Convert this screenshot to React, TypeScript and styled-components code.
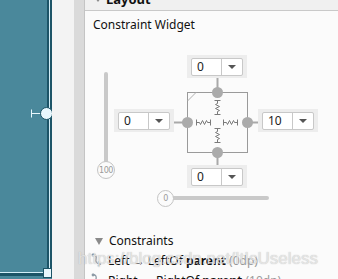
import React from 'react';
import styled, { createGlobalStyle } from 'styled-components';

const GlobalStyle = createGlobalStyle`
  html, body { margin: 0; padding: 0; }
  body {
    width: 338px;
    height: 279px;
    overflow: hidden;
    font-family: 'Noto Sans', 'Open Sans', sans-serif;
    background: #fbfbfb;
  }
`;

const Screen = styled.div`
  display: flex;
  width: 338px;
  height: 279px;
  overflow: hidden;
  position: relative;
`;

/* ---------- blueprint canvas ---------- */

const Canvas = styled.div`
  flex: none;
  width: 52px;
  height: 279px;
  background: #4a889b;
  position: relative;
  overflow: hidden;
`;

const SelectionOuter = styled.div`
  box-sizing: border-box;
  width: 52px;
  height: 276px;
  border-right: 2px solid #1c5467;
  border-bottom: 3px solid #1c5467;
`;

const SelectionLight = styled.div`
  box-sizing: border-box;
  height: 100%;
  border-right: 1px solid #d3eef7;
  border-bottom: 1px solid #d3eef7;
`;

const SelectionInner = styled.div`
  height: 100%;
  box-sizing: border-box;
  border-right: 2px solid #1c5467;
  background: #4a889b;
`;

const SideHandle = styled.div`
  position: absolute;
  left: 40px;
  top: 107px;
  width: 11px;
  height: 11px;
  border-radius: 50%;
  background: #e8f7fd;
  border: 1.5px solid #1c5467;
`;

const CornerHandle = styled.div`
  position: absolute;
  left: 43px;
  top: 268px;
  width: 7px;
  height: 8px;
  background: #e8f7fd;
  border: 1px solid #1c5467;
`;

const Anchor = styled.svg`
  position: absolute;
  left: 30px;
  top: 108px;
`;

/* ---------- gutter ---------- */

const Gutter = styled.div`
  flex: none;
  width: 22px;
  background: #f3f3f3;
`;

const Scroller = styled.div`
  flex: none;
  width: 10px;
  background: #dadada;
  border-right: 1px solid #c4c4c4;
`;

/* ---------- attributes panel ---------- */

const Panel = styled.div`
  flex: 1;
  background: #fbfbfb;
  min-width: 0;
  overflow: hidden;
`;

const Header = styled.div`
  height: 10px;
  background: #f0f0f0;
  border-bottom: 1px solid #c9c9c9;
  overflow: hidden;
  display: flex;
  align-items: flex-end;
  gap: 5px;
  padding-left: 10px;
`;

const HeaderText = styled.span`
  font-weight: bold;
  font-size: 13px;
  line-height: 13px;
  margin-bottom: 4px;
  color: #111;
`;

const HeaderCaret = styled.span`
  width: 0;
  height: 0;
  border-left: 3px solid transparent;
  border-right: 3px solid transparent;
  border-top: 4px solid #8a8a8a;
  margin-bottom: 8px;
`;

const Title = styled.div`
  margin-top: 6px;
  padding-left: 8px;
  font-size: 12px;
  line-height: 16px;
  color: #111;
`;

const Widget = styled.div`
  position: relative;
  height: 189px;
`;

const Diagram = styled.svg`
  position: absolute;
  left: 0;
  top: 0;
`;

const DropBox = styled.div<{ x: number; y: number }>`
  position: absolute;
  left: ${(p) => p.x}px;
  top: ${(p) => p.y}px;
  padding: 3px 4px 2px 4px;
  background: #ededed;
`;

const Field = styled.div`
  box-sizing: border-box;
  width: 52px;
  height: 18px;
  display: flex;
  background: #fff;
  border: 1px solid #c8c8c8;
  border-radius: 2px;
`;

const FieldValue = styled.span`
  flex: 1;
  padding-left: 5px;
  font-size: 12px;
  line-height: 16px;
  color: #222;
`;

const FieldButton = styled.span`
  width: 20px;
  border-left: 1px solid #c8c8c8;
  display: flex;
  align-items: center;
  justify-content: center;
  &::after {
    content: '';
    border-left: 4px solid transparent;
    border-right: 4px solid transparent;
    border-top: 4px solid #555;
  }
`;

const Track = styled.div<{ vertical?: boolean }>`
  position: absolute;
  background: #c9c9c9;
  border-radius: 2px;
  ${(p) =>
    p.vertical
      ? 'left: 19px; top: 39px; width: 4px; height: 92px;'
      : 'left: 87px; top: 163px; width: 97px; height: 4px;'}
`;

const Knob = styled.div<{ x: number; y: number; size: number }>`
  position: absolute;
  left: ${(p) => p.x}px;
  top: ${(p) => p.y}px;
  width: ${(p) => p.size}px;
  height: ${(p) => p.size}px;
  box-sizing: border-box;
  border-radius: 50%;
  border: 1px solid #c4c4c4;
  background: #fbfbfb;
  display: flex;
  align-items: center;
  justify-content: center;
  font-family: 'DejaVu Sans', sans-serif;
  font-size: 8px;
  letter-spacing: -0.5px;
  color: #9a9a9a;
`;

const SectionHead = styled.div`
  margin-top: 10px;
  padding-left: 10px;
  display: flex;
  align-items: center;
  gap: 6px;
  font-size: 12px;
  line-height: 18px;
  color: #111;
`;

const Caret = styled.span`
  width: 0;
  height: 0;
  border-left: 4px solid transparent;
  border-right: 4px solid transparent;
  border-top: 7px solid #8a8a8a;
`;

const ConstraintRow = styled.div`
  display: flex;
  align-items: center;
  gap: 6px;
  padding-left: 6px;
  height: 20px;
  font-size: 12px;
  color: #111;
  white-space: nowrap;
`;

const Strong = styled.b`
  font-weight: bold;
`;

const Muted = styled.span`
  color: #9a9a9a;
`;

const Watermark = styled.div`
  position: absolute;
  left: 78px;
  top: 249px;
  font-family: 'Liberation Sans', Arial, sans-serif;
  font-size: 17px;
  color: rgba(235, 235, 235, 0.85);
  text-shadow: 0 0 1px rgba(120, 120, 120, 0.5);
  white-space: nowrap;
  pointer-events: none;
`;

const Dropdown: React.FC<{ x: number; y: number; value: string }> = ({ x, y, value }) => (
  <DropBox x={x} y={y}>
    <Field>
      <FieldValue>{value}</FieldValue>
      <FieldButton />
    </Field>
  </DropBox>
);

const LinkIcon = () => (
  <svg width="11" height="14" viewBox="0 0 11 14">
    <path d="M2 1.5 Q6 2 5 6 Q4 10 8.5 11" fill="none" stroke="#8d9aa6" strokeWidth="1.3" />
    <circle cx="2" cy="2" r="1.4" fill="#8d9aa6" />
    <path d="M7 8.5 L9.5 11 L7 13" fill="none" stroke="#8d9aa6" strokeWidth="1.2" />
  </svg>
);

// spring drawn along an axis: start/end in widget coords
const vSpring = (x: number, y1: number, y2: number) => {
  const m = (y1 + y2) / 2;
  return `M${x - 3} ${y1} H${x + 3} M${x} ${y1} V${m - 4} L${x - 2} ${m - 3} L${x + 2} ${m - 1} L${x - 2} ${m + 1} L${x + 2} ${m + 3} L${x} ${m + 4} V${y2} M${x - 3} ${y2} H${x + 3}`;
};
const hSpring = (y: number, x1: number, x2: number) => {
  const m = (x1 + x2) / 2;
  return `M${x1} ${y - 3} V${y + 3} M${x1} ${y} H${m - 4} L${m - 3} ${y + 2} L${m - 1} ${y - 2} L${m + 1} ${y + 2} L${m + 3} ${y - 2} L${m + 4} ${y} H${x2} M${x2} ${y - 3} V${y + 3}`;
};

export default function App() {
  return (
    <>
      <GlobalStyle />
      <Screen>
        <Canvas>
          <SelectionOuter>
            <SelectionLight>
              <SelectionInner />
            </SelectionLight>
          </SelectionOuter>
          <Anchor width="11" height="11" viewBox="0 0 11 11">
            <path d="M1.5 1.5 V9.5 M1.5 5.5 H10" stroke="#e8f7fd" strokeWidth="1" fill="none" />
          </Anchor>
          <SideHandle />
          <CornerHandle />
        </Canvas>
        <Gutter />
        <Scroller />
        <Panel>
          <Header>
            <HeaderCaret />
            <HeaderText>Layout</HeaderText>
          </Header>
          <Title>Constraint Widget</Title>
          <Widget>
            <Track vertical />
            <Knob x={12} y={128} size={18}>100</Knob>
            <Track />
            <Knob x={72} y={157} size={17}>0</Knob>
            <Diagram width="253" height="189" viewBox="0 0 253 189">
              <g stroke="#a9a9a9" strokeWidth="2">
                <line x1="132.5" y1="45" x2="132.5" y2="59" />
                <line x1="89" y1="89.5" x2="102" y2="89.5" />
                <line x1="162" y1="89.5" x2="173" y2="89.5" />
                <line x1="132.5" y1="119" x2="132.5" y2="132" />
              </g>
              <rect x="102.5" y="59.5" width="60" height="60" fill="none" stroke="#9a9a9a" strokeWidth="1" />
              <line x1="102.5" y1="68" x2="111" y2="59.5" stroke="#b0b0b0" strokeWidth="1" />
              <g stroke="#7a7a7a" strokeWidth="1" fill="none">
                <path d={vSpring(132.5, 67.5, 81.5)} />
                <path d={vSpring(132.5, 95.5, 109.5)} />
                <path d={hSpring(89.5, 111.5, 125.5)} />
                <path d={hSpring(89.5, 138.5, 152.5)} />
              </g>
              <g fill="#ababab">
                <circle cx="132.5" cy="59.5" r="5.5" />
                <circle cx="102.5" cy="89.5" r="5.5" />
                <circle cx="162.5" cy="89.5" r="5.5" />
                <circle cx="132.5" cy="119.5" r="5.5" />
              </g>
            </Diagram>
            <Dropdown x={102} y={22} value="0" />
            <Dropdown x={29} y={76} value="0" />
            <Dropdown x={173} y={76} value="10" />
            <Dropdown x={102} y={132} value="0" />
          </Widget>
          <SectionHead>
            <Caret />
            <span>Constraints</span>
          </SectionHead>
          <ConstraintRow>
            <LinkIcon />
            <span>
              Left → LeftOf <Strong>parent</Strong> <Muted>(0dp)</Muted>
            </span>
          </ConstraintRow>
          <ConstraintRow>
            <LinkIcon />
            <span>
              Right → RightOf <Strong>parent</Strong> <Muted>(10dp)</Muted>
            </span>
          </ConstraintRow>
        </Panel>
        <Watermark>https://blog.csdn.net/ItIsUseless</Watermark>
      </Screen>
    </>
  );
}
